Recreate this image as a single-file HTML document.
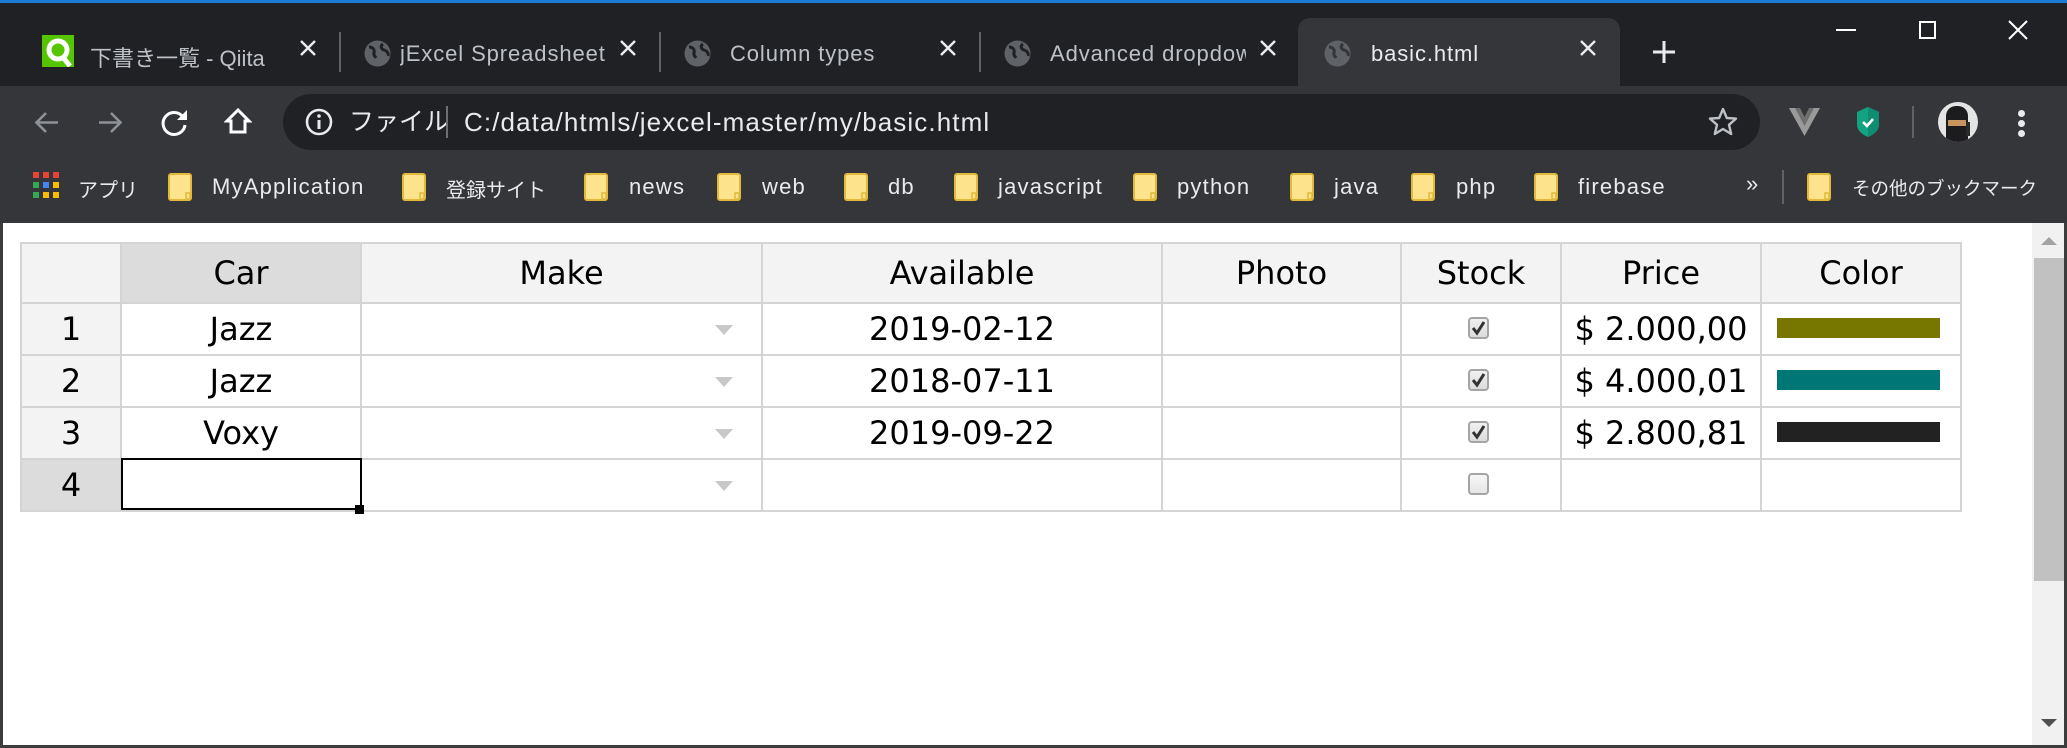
<!DOCTYPE html>
<html><head><meta charset="utf-8">
<style>
*{margin:0;padding:0;box-sizing:border-box}
html,body{width:2067px;height:748px;overflow:hidden;background:#fff}
body{position:relative;font-family:"Liberation Sans","Noto Sans CJK JP",sans-serif}
.a{position:absolute}
.ui{color:#bdc1c6;font-size:21px;line-height:24px;white-space:nowrap}
.tabt{position:absolute;top:41px;font-size:22px;letter-spacing:0.9px;color:#bdc1c6;white-space:nowrap;overflow:hidden}
.x{position:absolute;top:38px;width:20px;height:20px}
.glb{position:absolute;top:40px;width:27px;height:27px}
.sep{position:absolute;top:32px;width:2px;height:40px;background:#5f6368}
.bm{position:absolute;top:174px;font-size:22px;letter-spacing:1.2px;color:#e8eaed;white-space:nowrap}
.jp{font-size:20px;letter-spacing:0;top:174px}
.fd{position:absolute;top:173px;width:24px;height:28px}
.c{position:absolute;border-right:2px solid #d4d4d4;border-bottom:2px solid #d4d4d4;font-family:"DejaVu Sans","Liberation Sans",sans-serif;font-size:32px;color:#000;text-align:center;display:flex;align-items:center;justify-content:center}
.h{background:#f3f3f3}
.cb{position:absolute;width:21px;height:22px;border:2px solid #a5a5a5;border-radius:4px;background:linear-gradient(#f0f0f0,#dcdcdc)}
.tri{position:absolute;width:0;height:0;border-left:9px solid transparent;border-right:9px solid transparent;border-top:10px solid #c8c8c8}
</style></head><body>
<div class="a" style="left:0;top:0;width:2067px;height:86px;background:#202124"></div>
<div class="a" style="left:0;top:0;width:2067px;height:3px;background:#1a7bd6"></div>
<div class="a" style="left:1298px;top:18px;width:322px;height:70px;background:#35363a;border-radius:12px 12px 0 0"></div>
<div class="a" style="left:42px;top:35px;width:32px;height:32px;background:#55c500"></div>
<svg class="a" style="left:42px;top:35px" width="32" height="32"><circle cx="16" cy="15" r="9" fill="none" stroke="#fff" stroke-width="5"/><path d="M20 21 L28 31" stroke="#fff" stroke-width="5"/></svg>
<div class="tabt" style="left:90px;width:200px;letter-spacing:0;top:41px">下書き一覧 - Qiita</div>
<svg class="x" style="left:298px"><path d="M3 3L17 17M17 3L3 17" stroke="#e8eaed" stroke-width="2.4"/></svg>
<div class="sep" style="left:339px"></div>
<svg class="glb" style="left:364px"><circle cx="13.5" cy="13.5" r="13" fill="#5f6368"/><path d="M5 7c4 0 6 3 5 6-1 2 1 3 2 5M19 4c-3 2-2 5 1 6 3 1 5 3 4 6" stroke="#202124" stroke-width="3" fill="none"/></svg>
<div class="tabt" style="left:400px;width:206px">jExcel Spreadsheet</div>
<svg class="x" style="left:618px"><path d="M3 3L17 17M17 3L3 17" stroke="#e8eaed" stroke-width="2.4"/></svg>
<div class="sep" style="left:659px"></div>
<svg class="glb" style="left:684px"><circle cx="13.5" cy="13.5" r="13" fill="#5f6368"/><path d="M5 7c4 0 6 3 5 6-1 2 1 3 2 5M19 4c-3 2-2 5 1 6 3 1 5 3 4 6" stroke="#202124" stroke-width="3" fill="none"/></svg>
<div class="tabt" style="left:730px;width:200px">Column types</div>
<svg class="x" style="left:938px"><path d="M3 3L17 17M17 3L3 17" stroke="#e8eaed" stroke-width="2.4"/></svg>
<div class="sep" style="left:979px"></div>
<svg class="glb" style="left:1004px"><circle cx="13.5" cy="13.5" r="13" fill="#5f6368"/><path d="M5 7c4 0 6 3 5 6-1 2 1 3 2 5M19 4c-3 2-2 5 1 6 3 1 5 3 4 6" stroke="#202124" stroke-width="3" fill="none"/></svg>
<div class="tabt" style="left:1050px;width:196px">Advanced dropdown</div>
<svg class="x" style="left:1258px"><path d="M3 3L17 17M17 3L3 17" stroke="#e8eaed" stroke-width="2.4"/></svg>
<svg class="glb" style="left:1324px"><circle cx="13.5" cy="13.5" r="13" fill="#5f6368"/><path d="M5 7c4 0 6 3 5 6-1 2 1 3 2 5M19 4c-3 2-2 5 1 6 3 1 5 3 4 6" stroke="#35363a" stroke-width="3" fill="none"/></svg>
<div class="tabt" style="left:1371px;width:200px;color:#e8eaed">basic.html</div>
<svg class="x" style="left:1578px"><path d="M3 3L17 17M17 3L3 17" stroke="#e8eaed" stroke-width="2.4"/></svg>
<svg class="a" style="left:1652px;top:40px" width="24" height="24"><path d="M12 1V23M1 12H23" stroke="#e8eaed" stroke-width="3"/></svg>
<div class="a" style="left:1836px;top:29px;width:20px;height:2px;background:#fff"></div>
<div class="a" style="left:1919px;top:21px;width:17px;height:18px;border:2px solid #fff"></div>
<svg class="a" style="left:2008px;top:20px" width="20" height="20"><path d="M1 1L19 19M19 1L1 19" stroke="#fff" stroke-width="2"/></svg>

<div class="a" style="left:0;top:86px;width:2067px;height:137px;background:#35363a"></div>
<svg class="a" style="left:33px;top:109px" width="27" height="27"><path d="M25 13.5H4M13 4L3.5 13.5L13 23" stroke="#8e9296" stroke-width="2.6" fill="none"/></svg>
<svg class="a" style="left:97px;top:109px" width="27" height="27"><path d="M2 13.5H23M14 4L23.5 13.5L14 23" stroke="#8e9296" stroke-width="2.6" fill="none"/></svg>
<svg class="a" style="left:160px;top:108px" width="29" height="29"><path d="M23 9A11 11 0 1 0 25 17" stroke="#fff" stroke-width="3" fill="none"/><path d="M27 2V12H17Z" fill="#fff"/></svg>
<svg class="a" style="left:224px;top:107px" width="28" height="28"><path d="M3 14L14 3L25 14H21V25H7V14Z" stroke="#fff" stroke-width="3" fill="none"/></svg>
<div class="a" style="left:283px;top:94px;width:1477px;height:56px;background:#202124;border-radius:28px"></div>
<svg class="a" style="left:305px;top:108px" width="28" height="28"><circle cx="14" cy="14" r="12" stroke="#e8eaed" stroke-width="2.6" fill="none"/><path d="M14 12V21" stroke="#e8eaed" stroke-width="3"/><circle cx="14" cy="8" r="1.8" fill="#e8eaed"/></svg>
<div class="a ui" style="left:349px;top:107px;font-size:25px;line-height:30px;color:#e8eaed">ファイル</div>
<div class="a" style="left:446px;top:106px;width:2px;height:32px;background:#6b6e72"></div>
<div class="a ui" style="left:464px;top:106px;font-size:26px;letter-spacing:1.1px;line-height:32px;color:#e8eaed">C:/data/htmls/jexcel-master/my/basic.html</div>
<svg class="a" style="left:1708px;top:107px" width="30" height="30"><path d="M15 2L18.8 11L28 11.6L21 17.8L23.2 27L15 22L6.8 27L9 17.8L2 11.6L11.2 11Z" stroke="#bdc1c6" stroke-width="2.4" fill="none" stroke-linejoin="round"/></svg>
<svg class="a" style="left:1788px;top:107px" width="33" height="30"><path d="M1 1H11L16.5 12L22 1H32L16.5 29Z" fill="#9a9a9a"/><path d="M7 1H12L16.5 10L21 1H26L16.5 19Z" fill="#6f6f6f"/></svg>
<svg class="a" style="left:1856px;top:106px" width="24" height="32"><path d="M12 1L23 6V18C23 25 17 29 12 31C7 29 1 25 1 18V6Z" fill="#13a383"/><path d="M12 1L23 6V18C23 25 17 29 12 31Z" fill="#0f8d70"/><path d="M7 16L11 20L17 13" stroke="#fff" stroke-width="2.6" fill="none"/></svg>
<div class="a" style="left:1912px;top:106px;width:2px;height:32px;background:#5f6368"></div>
<div class="a" style="left:1938px;top:102px;width:40px;height:40px;border-radius:20px;background:#e4e4e4;overflow:hidden">
 <div class="a" style="left:8px;top:4px;width:22px;height:40px;background:#1c1c1e;border-radius:10px 10px 0 0"></div>
 <div class="a" style="left:10px;top:18px;width:18px;height:6px;background:#c8945f"></div>
 <div class="a" style="left:28px;top:20px;width:4px;height:14px;background:#2a2a2a"></div>
</div>
<div class="a" style="left:2018px;top:110px;width:7px;height:7px;border-radius:4px;background:#e8eaed"></div>
<div class="a" style="left:2018px;top:120px;width:7px;height:7px;border-radius:4px;background:#e8eaed"></div>
<div class="a" style="left:2018px;top:130px;width:7px;height:7px;border-radius:4px;background:#e8eaed"></div>

<svg class="a" style="left:33px;top:172px" width="27" height="28">
<rect x="0" y="0" width="6" height="6" fill="#ea4335"/><rect x="10" y="0" width="6" height="6" fill="#ea4335"/><rect x="20" y="0" width="6" height="6" fill="#ea4335"/>
<rect x="0" y="10" width="6" height="6" fill="#34a853"/><rect x="10" y="10" width="6" height="6" fill="#4285f4"/><rect x="20" y="10" width="6" height="6" fill="#fbbc05"/>
<rect x="0" y="20" width="6" height="6" fill="#34a853"/><rect x="10" y="20" width="6" height="6" fill="#fbbc05"/><rect x="20" y="20" width="6" height="6" fill="#fbbc05"/></svg>
<div class="bm jp" style="left:78px">アプリ</div>
<svg width="0" height="0" style="position:absolute"><defs><symbol id="f" viewBox="0 0 24 28"><rect x="1" y="1" width="22" height="26" rx="2" fill="#fde48c" stroke="#e2b93b" stroke-width="2"/><rect x="18" y="20" width="4" height="6" fill="#fde48c" stroke="#e2b93b" stroke-width="1.5"/></symbol></defs></svg>
<svg class="fd" style="left:168px"><use href="#f"/></svg><div class="bm" style="left:212px">MyApplication</div>
<svg class="fd" style="left:402px"><use href="#f"/></svg><div class="bm jp" style="left:446px">登録サイト</div>
<svg class="fd" style="left:584px"><use href="#f"/></svg><div class="bm" style="left:629px">news</div>
<svg class="fd" style="left:717px"><use href="#f"/></svg><div class="bm" style="left:762px">web</div>
<svg class="fd" style="left:844px"><use href="#f"/></svg><div class="bm" style="left:888px">db</div>
<svg class="fd" style="left:954px"><use href="#f"/></svg><div class="bm" style="left:998px">javascript</div>
<svg class="fd" style="left:1133px"><use href="#f"/></svg><div class="bm" style="left:1177px">python</div>
<svg class="fd" style="left:1290px"><use href="#f"/></svg><div class="bm" style="left:1334px">java</div>
<svg class="fd" style="left:1411px"><use href="#f"/></svg><div class="bm" style="left:1456px">php</div>
<svg class="fd" style="left:1534px"><use href="#f"/></svg><div class="bm" style="left:1578px">firebase</div>
<div class="bm" style="left:1746px;top:171px;font-size:22px">»</div>
<div class="a" style="left:1782px;top:170px;width:2px;height:34px;background:#5f6368"></div>
<svg class="fd" style="left:1807px"><use href="#f"/></svg><div class="bm jp" style="left:1852px;font-size:18.5px;top:175px">その他のブックマーク</div>

<div class="a" style="left:0;top:223px;width:3px;height:525px;background:#3c3c3c"></div>
<div class="a" style="left:2064px;top:223px;width:3px;height:525px;background:#3c3c3c"></div>
<div class="a" style="left:0;top:745px;width:2067px;height:3px;background:#3c3c3c"></div>
<div class="a" style="left:2032px;top:223px;width:32px;height:522px;background:#f1f1f1"></div>
<div class="a" style="left:2034px;top:258px;width:30px;height:323px;background:#c1c1c1"></div>
<div class="a" style="left:2041px;top:237px;width:0;height:0;border-left:8px solid transparent;border-right:8px solid transparent;border-bottom:8px solid #a3a3a3"></div>
<div class="a" style="left:2041px;top:719px;width:0;height:0;border-left:8px solid transparent;border-right:8px solid transparent;border-top:8px solid #505050"></div>

<div class="a" style="left:20px;top:242px;width:1942px;height:270px;border-left:2px solid #d4d4d4;border-top:2px solid #d4d4d4"></div>
<div class="c h" style="left:22px;top:244px;width:100px;height:60px"></div>
<div class="c" style="left:122px;top:244px;width:240px;height:60px;background:#dcdcdc">Car</div>
<div class="c h" style="left:362px;top:244px;width:401px;height:60px">Make</div>
<div class="c h" style="left:763px;top:244px;width:400px;height:60px">Available</div>
<div class="c h" style="left:1163px;top:244px;width:239px;height:60px">Photo</div>
<div class="c h" style="left:1402px;top:244px;width:160px;height:60px">Stock</div>
<div class="c h" style="left:1562px;top:244px;width:200px;height:60px">Price</div>
<div class="c h" style="left:1762px;top:244px;width:200px;height:60px">Color</div>

<div class="c h" style="left:22px;top:304px;width:100px;height:52px">1</div>
<div class="c" style="left:122px;top:304px;width:240px;height:52px">Jazz</div>
<div class="c" style="left:362px;top:304px;width:401px;height:52px"></div>
<div class="c" style="left:763px;top:304px;width:400px;height:52px">2019-02-12</div>
<div class="c" style="left:1163px;top:304px;width:239px;height:52px"></div>
<div class="c" style="left:1402px;top:304px;width:160px;height:52px"></div>
<div class="c" style="left:1562px;top:304px;width:200px;height:52px">$ 2.000,00</div>
<div class="c" style="left:1762px;top:304px;width:200px;height:52px"></div>

<div class="c h" style="left:22px;top:356px;width:100px;height:52px">2</div>
<div class="c" style="left:122px;top:356px;width:240px;height:52px">Jazz</div>
<div class="c" style="left:362px;top:356px;width:401px;height:52px"></div>
<div class="c" style="left:763px;top:356px;width:400px;height:52px">2018-07-11</div>
<div class="c" style="left:1163px;top:356px;width:239px;height:52px"></div>
<div class="c" style="left:1402px;top:356px;width:160px;height:52px"></div>
<div class="c" style="left:1562px;top:356px;width:200px;height:52px">$ 4.000,01</div>
<div class="c" style="left:1762px;top:356px;width:200px;height:52px"></div>

<div class="c h" style="left:22px;top:408px;width:100px;height:52px">3</div>
<div class="c" style="left:122px;top:408px;width:240px;height:52px">Voxy</div>
<div class="c" style="left:362px;top:408px;width:401px;height:52px"></div>
<div class="c" style="left:763px;top:408px;width:400px;height:52px">2019-09-22</div>
<div class="c" style="left:1163px;top:408px;width:239px;height:52px"></div>
<div class="c" style="left:1402px;top:408px;width:160px;height:52px"></div>
<div class="c" style="left:1562px;top:408px;width:200px;height:52px">$ 2.800,81</div>
<div class="c" style="left:1762px;top:408px;width:200px;height:52px"></div>

<div class="c" style="left:22px;top:460px;width:100px;height:52px;background:#dcdcdc">4</div>
<div class="c" style="left:122px;top:460px;width:240px;height:52px"></div>
<div class="c" style="left:362px;top:460px;width:401px;height:52px"></div>
<div class="c" style="left:763px;top:460px;width:400px;height:52px"></div>
<div class="c" style="left:1163px;top:460px;width:239px;height:52px"></div>
<div class="c" style="left:1402px;top:460px;width:160px;height:52px"></div>
<div class="c" style="left:1562px;top:460px;width:200px;height:52px"></div>
<div class="c" style="left:1762px;top:460px;width:200px;height:52px"></div>

<div class="a" style="left:121px;top:458px;width:241px;height:52px;border:2px solid #000"></div>
<div class="a" style="left:355px;top:505px;width:9px;height:9px;background:#000"></div>

<div class="tri" style="left:715px;top:325px"></div>
<div class="tri" style="left:715px;top:377px"></div>
<div class="tri" style="left:715px;top:429px"></div>
<div class="tri" style="left:715px;top:481px"></div>

<div class="cb" style="left:1468px;top:317px"></div>
<div class="cb" style="left:1468px;top:369px"></div>
<div class="cb" style="left:1468px;top:421px"></div>
<div class="cb" style="left:1468px;top:473px;background:linear-gradient(#f6f6f6,#e6e6e6)"></div>
<svg class="a" style="left:1468px;top:317px" width="21" height="130"><path d="M5 11L9 16L16 5" stroke="#333" stroke-width="3" fill="none"/><path d="M5 63L9 68L16 57" stroke="#333" stroke-width="3" fill="none"/><path d="M5 115L9 120L16 109" stroke="#333" stroke-width="3" fill="none"/></svg>

<div class="a" style="left:1777px;top:318px;width:163px;height:20px;background:#777700"></div>
<div class="a" style="left:1777px;top:370px;width:163px;height:20px;background:#007777"></div>
<div class="a" style="left:1777px;top:422px;width:163px;height:20px;background:#222222"></div>
</body></html>
